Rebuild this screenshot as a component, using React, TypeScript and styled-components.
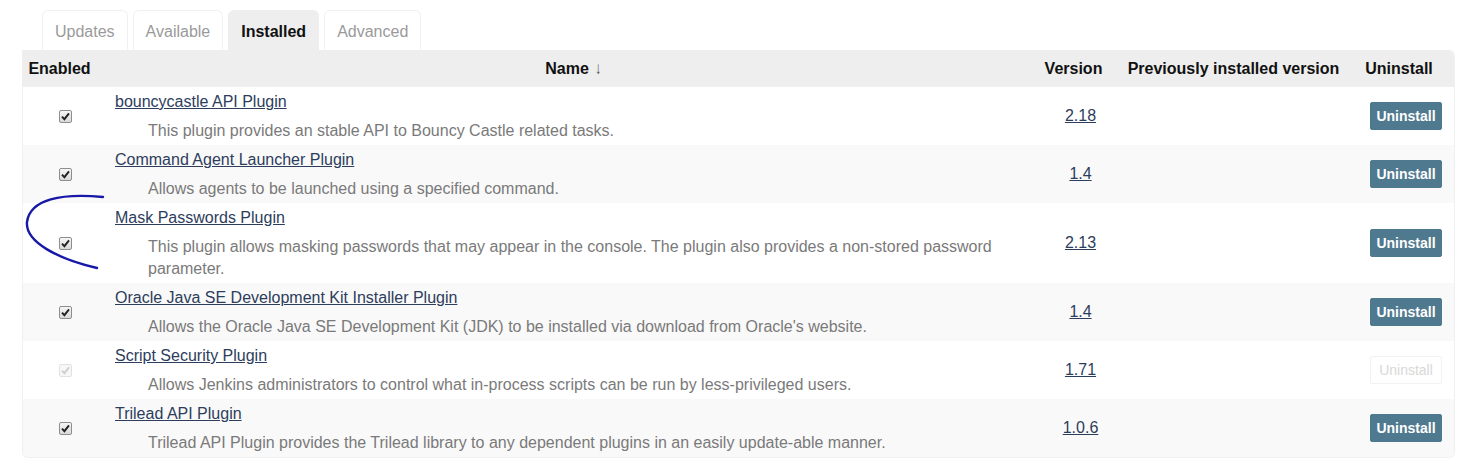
import React from "react";
import styled, { createGlobalStyle, css } from "styled-components";

const GlobalStyle = createGlobalStyle`
  html, body {
    margin: 0;
    padding: 0;
    background: #ffffff;
    font-family: "Liberation Sans", Arial, sans-serif;
    font-size: 16px;
    color: #333;
  }
`;

const Page = styled.div`
  position: relative;
  padding: 10px 9px 0 22px;
`;

const Tabs = styled.div`
  display: flex;
  gap: 5px;
  margin-left: 20px;
`;

const Tab = styled.div<{ $active?: boolean }>`
  height: 40px;
  box-sizing: border-box;
  padding: 2px 12px 0 12px;
  display: flex;
  align-items: center;
  border: 1px solid #f1f1f1;
  border-bottom: none;
  border-radius: 6px 6px 0 0;
  background: #ffffff;
  color: #9a9a9a;
  font-size: 16px;
  ${(p) =>
    p.$active &&
    css`
      background: #eeeeee;
      border-color: #eeeeee;
      color: #111;
      font-weight: bold;
    `}
`;

const Table = styled.table`
  width: 1431px;
  border-collapse: separate;
  border-spacing: 0;
  border: 1px solid #f0f0f0;
  border-top: none;
  border-radius: 0 6px 6px 6px;
  overflow: hidden;
  table-layout: fixed;
`;

const HeadCell = styled.th`
  background: #eeeeee;
  height: 37px;
  padding: 0;
  font-size: 16px;
  font-weight: bold;
  color: #111;
  text-align: center;
  vertical-align: middle;
  white-space: nowrap;
`;

const SortArrow = styled.span`
  display: inline-block;
  width: 14px;
  text-align: right;
  font-weight: normal;
  color: #555;
  font-size: 17px;
  line-height: 1;
  transform: scaleX(0.8);
`;

const Row = styled.tr<{ $alt?: boolean }>`
  background: ${(p) => (p.$alt ? "#f9f9f9" : "#ffffff")};
`;

const Cell = styled.td<{ $center?: boolean }>`
  padding: 0;
  vertical-align: middle;
  text-align: ${(p) => (p.$center ? "center" : "left")};
`;

const CheckCell = styled.td`
  padding: 0 3px 0 0;
  vertical-align: middle;
  text-align: center;
`;

const NameCell = styled.td`
  padding: 5px 6px 3px 5px;
  vertical-align: top;
`;

const PluginLink = styled.a`
  display: block;
  line-height: 20px;
  color: #2d3d5c;
  text-decoration: underline;
  font-size: 16px;
  cursor: pointer;
`;

const Description = styled.div`
  margin-top: 8px;
  padding-left: 33px;
  line-height: 22px;
  color: #7a7a7a;
  font-size: 16px;
`;

const VersionLink = styled.a`
  color: #2d3d5c;
  text-decoration: underline;
  font-size: 16px;
`;

const CheckBox = styled.span<{ $disabled?: boolean }>`
  display: inline-flex;
  align-items: center;
  justify-content: center;
  width: 13px;
  height: 13px;
  box-sizing: border-box;
  border: 1px solid ${(p) => (p.$disabled ? "#e2e2e2" : "#8e8e8e")};
  border-radius: 2px;
  background: ${(p) =>
    p.$disabled ? "#f7f7f7" : "linear-gradient(#f6f6f6, #d9d9d9)"};
  color: ${(p) => (p.$disabled ? "#cfcfcf" : "#222")};
  vertical-align: middle;
`;

const UninstallButton = styled.button<{ $disabled?: boolean }>`
  width: 72px;
  height: 28px;
  padding: 0;
  border-radius: 2px;
  font-family: "Liberation Sans", Arial, sans-serif;
  font-size: 14px;
  font-weight: bold;
  cursor: pointer;
  ${(p) =>
    p.$disabled
      ? css`
          background: #ffffff;
          border: 1px solid #f2f2f2;
          color: #d8d8d8;
          font-weight: normal;
        `
      : css`
          background: #4f798e;
          border: 1px solid #4f798e;
          color: #ffffff;
        `}
`;

const Annotation = styled.svg`
  position: absolute;
  left: 0;
  top: 0;
  pointer-events: none;
`;

type Plugin = {
  name: string;
  desc: string;
  version: string;
  disabled?: boolean;
};

const plugins: Plugin[] = [
  {
    name: "bouncycastle API Plugin",
    desc: "This plugin provides an stable API to Bouncy Castle related tasks.",
    version: "2.18",
  },
  {
    name: "Command Agent Launcher Plugin",
    desc: "Allows agents to be launched using a specified command.",
    version: "1.4",
  },
  {
    name: "Mask Passwords Plugin",
    desc: "This plugin allows masking passwords that may appear in the console. The plugin also provides a non-stored password parameter.",
    version: "2.13",
  },
  {
    name: "Oracle Java SE Development Kit Installer Plugin",
    desc: "Allows the Oracle Java SE Development Kit (JDK) to be installed via download from Oracle's website.",
    version: "1.4",
  },
  {
    name: "Script Security Plugin",
    desc: "Allows Jenkins administrators to control what in-process scripts can be run by less-privileged users.",
    version: "1.71",
    disabled: true,
  },
  {
    name: "Trilead API Plugin",
    desc: "Trilead API Plugin provides the Trilead library to any dependent plugins in an easily update-able manner.",
    version: "1.0.6",
  },
];

const Check = () => (
  <svg width="9" height="9" viewBox="0 0 9 9">
    <path d="M1 4.6 L3.4 7.2 L8 1.4" fill="none" stroke="currentColor" strokeWidth="1.9" />
  </svg>
);

export default function App() {
  return (
    <>
      <GlobalStyle />
      <Page>
        <Tabs>
          <Tab>Updates</Tab>
          <Tab>Available</Tab>
          <Tab $active>Installed</Tab>
          <Tab>Advanced</Tab>
        </Tabs>
        <Table>
          <colgroup>
            <col style={{ width: 87 }} />
            <col style={{ width: 928 }} />
            <col style={{ width: 85 }} />
            <col style={{ width: 235 }} />
            <col style={{ width: 96 }} />
          </colgroup>
          <thead>
            <tr>
              <HeadCell>
                Enabled<SortArrow />
              </HeadCell>
              <HeadCell>
                Name<SortArrow>↓</SortArrow>
              </HeadCell>
              <HeadCell>
                Version<SortArrow />
              </HeadCell>
              <HeadCell>
                Previously installed version<SortArrow />
              </HeadCell>
              <HeadCell>
                Uninstall<SortArrow />
              </HeadCell>
            </tr>
          </thead>
          <tbody>
            {plugins.map((p, i) => (
              <Row key={p.name} $alt={i % 2 === 1}>
                <CheckCell>
                  <CheckBox $disabled={p.disabled}>
                    <Check />
                  </CheckBox>
                </CheckCell>
                <NameCell>
                  <PluginLink>{p.name}</PluginLink>
                  <Description>{p.desc}</Description>
                </NameCell>
                <Cell $center>
                  <VersionLink>{p.version}</VersionLink>
                </Cell>
                <Cell />
                <Cell $center>
                  <UninstallButton $disabled={p.disabled}>Uninstall</UninstallButton>
                </Cell>
              </Row>
            ))}
          </tbody>
        </Table>
        <Annotation width="120" height="280">
          <path
            d="M103 197 C 62 193, 30 199, 27 222 C 25 242, 58 259, 97 268"
            fill="none"
            stroke="#1818a8"
            strokeWidth="2.4"
            strokeLinecap="round"
          />
        </Annotation>
      </Page>
    </>
  );
}
